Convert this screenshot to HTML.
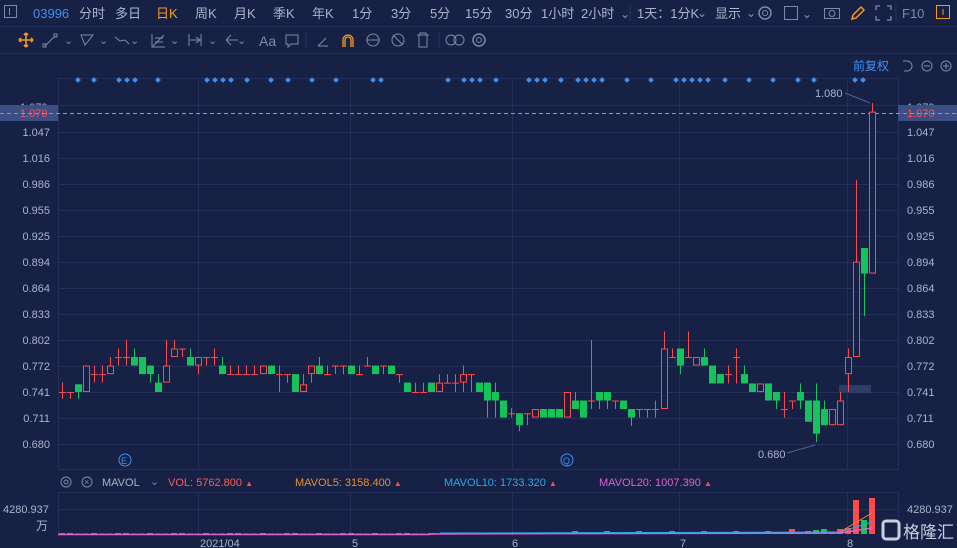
<!DOCTYPE html><html><head><meta charset="utf-8"><style>
*{margin:0;padding:0;box-sizing:border-box}
body{width:957px;height:548px;background:#172146;font-family:"Liberation Sans","Noto Sans CJK SC",sans-serif;overflow:hidden;position:relative;color:#aab4cc}
svg{position:absolute;left:0;top:0}
</style></head><body>
<svg id="s" width="957" height="548" xmlns="http://www.w3.org/2000/svg"></svg>
<script>
(function(){
var s='';
function L(x1,y1,x2,y2,c,w,d){s+='<line x1="'+x1+'" y1="'+y1+'" x2="'+x2+'" y2="'+y2+'" stroke="'+c+'" stroke-width="'+(w||1)+'"'+(d?' stroke-dasharray="'+d+'"':'')+'/>';}
function R(x,y,w,h,f,st){s+='<rect x="'+x+'" y="'+y+'" width="'+w+'" height="'+h+'" fill="'+(f||'none')+'"'+(st?' stroke="'+st+'"':'')+'/>';}
function T(x,y,t,c,sz,a){s+='<text x="'+x+'" y="'+y+'" fill="'+c+'" font-size="'+(sz||12)+'"'+(a?' text-anchor="'+a+'"':'')+' font-family="Liberation Sans,Noto Sans CJK SC,sans-serif">'+t+'</text>';}
L(0,26.5,957,26.5,'#25305a');L(0,53.5,957,53.5,'#25305a');
R(4.5,5.5,12,12,'none','#7f8aa6');L(9.5,8,9.5,15,'#7f8aa6');
var tb=[[33,'03996','#3f8fef'],[79,'分时'],[115,'多日'],[156,'日K','#f59a23'],[195,'周K'],[234,'月K'],[273,'季K'],[312,'年K'],[352,'1分'],[391,'3分'],[430,'5分'],[465,'15分'],[505,'30分'],[541,'1小时'],[581,'2小时'],[637,'1天：1分K'],[715,'显示']];
tb.forEach(function(a){T(a[0],18,a[1],a[2]||'#aab4cc',13);});
T(620,18,'⌄','#8a94b0',12);T(697,17,'⌄','#8a94b0',12);T(746,17,'⌄','#8a94b0',12);
L(630,5,630,21,'#2a3560');L(896,5,896,21,'#2a3560');
s+='<circle cx="765" cy="13" r="6" fill="none" stroke="#7f8aa6" stroke-width="1.5"/><circle cx="765" cy="13" r="2.5" fill="none" stroke="#7f8aa6"/>';
R(784.5,6.5,13,13,'none','#7f8aa6');T(802,18,'⌄','#8a94b0',12);
R(824.5,8.5,15,10,'none','#7f8aa6');s+='<circle cx="832" cy="13.5" r="3" fill="none" stroke="#7f8aa6"/>';
s+='<path d="M852 19 L853 15 L861 7 L864 10 L856 18 Z" fill="none" stroke="#f59a23" stroke-width="1.5"/>';
s+='<path d="M876 10V6h4M887 6h4v4M876 16v4h4M891 16v4h-4" fill="none" stroke="#7f8aa6" stroke-width="1.3"/>';
T(902,18,'F10','#7f8aa6',13);R(936.5,5.5,13,13,'none','#f59a23');L(943,9,943,15,'#f59a23');
s+='<path d="M26 33v14M19 40h14M26 33l-2 2M26 33l2 2M26 47l-2-2M26 47l2-2M19 40l2-2M19 40l2 2M33 40l-2-2M33 40l-2 2" stroke="#f59a23" stroke-width="1.6" fill="none"/>';
var g='#7f8aa6';
s+='<path d="M45 46l10-10" stroke="'+g+'" fill="none"/><rect x="43" y="44" width="3" height="3" fill="none" stroke="'+g+'"/><rect x="54" y="34" width="3" height="3" fill="none" stroke="'+g+'"/>';
[64,99,130,170,208,237].forEach(function(x){T(x,44,'⌄',g,11);});
s+='<path d="M81 35h12l-8 10z" fill="none" stroke="'+g+'"/>';
s+='<path d="M115 37l5 4 5-1 4 4" fill="none" stroke="'+g+'"/>';
s+='<path d="M152 34v13h13M153 46l11-11M155 38h8M155 42h8" fill="none" stroke="'+g+'"/>';
s+='<path d="M189 34v12M201 34v12M190 40h10M196 37l4 3-4 3" fill="none" stroke="'+g+'"/>';
s+='<path d="M226 40h12M226 40l5-5M226 40l5 5" fill="none" stroke="'+g+'"/>';
T(259,46,'Aa',g,14);
s+='<path d="M286 35h12v9h-7l-3 3v-3h-2z" fill="none" stroke="'+g+'"/>';
L(306,32,306,48,'#2a3560');
s+='<path d="M318 46h10M318 46l8-8" fill="none" stroke="'+g+'"/>';
s+='<path d="M343 47v-7a5 5 0 0110 0v7M345 47v-7a3 3 0 016 0v7" fill="none" stroke="#f59a23" stroke-width="1.3"/>';
s+='<circle cx="373" cy="40" r="6" fill="none" stroke="'+g+'"/><path d="M366 40h14" stroke="'+g+'"/>';
s+='<circle cx="398" cy="40" r="6" fill="none" stroke="'+g+'"/><path d="M393 35l10 10" stroke="'+g+'"/>';
s+='<path d="M417 35h12M420 35v-2h6v2M419 35v12h8V35" fill="none" stroke="'+g+'"/>';
L(439,32,439,48,'#2a3560');
s+='<circle cx="451" cy="40" r="5" fill="none" stroke="'+g+'"/><circle cx="459" cy="40" r="5" fill="none" stroke="'+g+'"/>';
s+='<circle cx="479" cy="40" r="6" fill="none" stroke="'+g+'" stroke-width="1.5"/><circle cx="479" cy="40" r="2.5" fill="none" stroke="'+g+'"/>';
T(853,70,'前复权','#3f8fef',12);
s+='<path d="M903 61h4a5 5 0 010 10h-3" fill="none" stroke="'+g+'"/>';
s+='<circle cx="927" cy="66" r="5" fill="none" stroke="'+g+'"/><path d="M924 66h6" stroke="'+g+'"/>';
s+='<circle cx="946" cy="66" r="5" fill="none" stroke="'+g+'"/><path d="M943 66h6M946 63v6" stroke="'+g+'"/>';
var gc='#24305a';
L(58.5,78,58.5,470,gc);L(898.5,78,898.5,470,gc);L(58,78.5,898,78.5,gc);L(58,469.5,898,469.5,gc);
var lv=[[1.047,132],[1.016,158],[0.986,184],[0.955,210],[0.925,236],[0.894,262],[0.864,288],[0.833,314],[0.802,340],[0.772,366],[0.741,392],[0.711,418],[0.680,444]];
lv.forEach(function(a){L(58,a[1]+.5,898,a[1]+.5,gc);T(50,a[1]+4,a[0].toFixed(3),'#aab4cc',11,'end');T(907,a[1]+4,a[0].toFixed(3),'#aab4cc',11);});
L(58,105.5,898,105.5,gc);
[198,350,512,679,847].forEach(function(x){L(x+.5,78,x+.5,470,gc);L(x+.5,492,x+.5,536,gc);});
[78,94,119,127,135,158,207,215,223,231,247,271,288,312,336,373,381,448,464,472,480,496,529,537,545,561,578,586,594,602,627,651,676,684,692,700,708,725,749,773,798,814,855,863].forEach(function(x){s+='<rect x="'+(x-2)+'" y="78" width="4" height="4" fill="#3f8fef" transform="rotate(45 '+x+' 80)"/>';});
T(907,111,'1.070','#aab4cc',11);T(20,111,'1.070','#aab4cc',11);
R(0,105,58,16,'#3b4f85');T(20,117,'1.070','#ff4d4d',11);
R(898,105,59,16,'#3b4f85');T(907,117,'1.070','#ff4d4d',11);
L(0,113.5,957,113.5,'#d4884a',1,'4,3');
function Y(p){return 340+(0.802-p)*852;}
var C=[[.741,.741,.752,.733],[.741,.741,.741,.733],[.750,.741,.750,.733],[.741,.772,.772,.741],[.762,.762,.772,.752],[.762,.762,.772,.752],[.762,.772,.782,.762],[.782,.782,.792,.772],[.782,.782,.802,.772],[.782,.772,.792,.772],[.782,.762,.782,.762],[.772,.762,.772,.752],[.752,.741,.762,.741],[.752,.772,.802,.752],[.782,.792,.802,.782],[.792,.792,.792,.782],[.782,.772,.792,.772],[.772,.782,.782,.762],[.782,.782,.782,.772],[.782,.782,.792,.772],[.772,.762,.782,.762],[.762,.762,.772,.762],[.762,.762,.772,.762],[.762,.762,.772,.762],[.762,.762,.772,.762],[.762,.772,.772,.762],[.772,.762,.772,.762],[.762,.762,.772,.741],[.762,.762,.762,.752],[.762,.741,.762,.741],[.741,.750,.762,.741],[.762,.772,.772,.752],[.772,.762,.782,.762],[.762,.762,.772,.762],[.772,.772,.772,.762],[.772,.772,.772,.762],[.772,.762,.772,.762],[.762,.762,.772,.762],[.772,.772,.782,.772],[.772,.762,.772,.762],[.772,.772,.772,.762],[.772,.762,.772,.762],[.762,.762,.762,.752],[.752,.741,.752,.741],[.741,.741,.752,.741],[.741,.741,.752,.741],[.752,.741,.752,.741],[.741,.752,.762,.741],[.752,.752,.762,.752],[.752,.752,.762,.741],[.752,.762,.772,.741],[.762,.762,.762,.741],[.752,.741,.752,.741],
[.752,.731,.752,.711],[.741,.731,.752,.711],[.731,.711,.731,.711],[.716,.716,.722,.711],[.716,.702,.716,.695],[.716,.716,.716,.702],[.711,.721,.721,.711],[.721,.711,.721,.711],[.721,.711,.721,.711],[.721,.711,.721,.711],[.711,.741,.741,.711],[.731,.721,.741,.721],[.731,.711,.731,.711],[.731,.731,.802,.721],[.741,.731,.741,.721],[.741,.731,.741,.721],[.731,.731,.731,.721],[.731,.721,.731,.721],[.721,.711,.721,.701],[.721,.721,.721,.711],[.721,.721,.721,.711],[.721,.721,.731,.711],[.721,.792,.812,.721],[.782,.782,.792,.782],[.792,.772,.792,.762],[.782,.782,.812,.782],[.772,.782,.782,.772],[.782,.772,.792,.772],[.772,.751,.772,.751],[.762,.751,.762,.751],[.762,.762,.772,.751],[.782,.782,.792,.751],[.762,.751,.772,.751],[.751,.741,.751,.741],[.741,.751,.751,.741],[.751,.731,.751,.731],[.741,.731,.741,.721],[.721,.721,.741,.711],[.731,.731,.731,.721],[.741,.731,.751,.721],[.731,.706,.731,.706],[.731,.692,.751,.682],[.721,.702,.731,.702],[.702,.721,.721,.702],[.702,.731,.741,.702],[.762,.782,.792,.741],[.782,.894,.99,.782],[.91,.88,.91,.83],[.88,1.07,1.08,.88]];
R(839,385,32,8,'#2c3d68');
C.forEach(function(c,i){var x=Math.round(62+i*8.02);var up=c[1]>=c[0];var col=up?'#ff4a4a':'#14c45a';
var yo=Y(c[0]),yc=Y(c[1]),yh=Y(c[2]),yl=Y(c[3]);var t=Math.min(yo,yc),b=Math.max(yo,yc);
L(x+.5,yh,x+.5,yl,col);
if(b-t<1.5){L(x-3,t+.5,x+4,t+.5,col);}else if(up){R(x-2.5,t+.5,6,b-t-1,'#172146',col);}else{R(x-3,t,7,b-t,col);}
});
T(815,97,'1.080','#aab4cc',11);L(845,93,870,103,'#55608a');
T(758,458,'0.680','#aab4cc',11);L(787,453,815,445,'#55608a');
s+='<circle cx="125" cy="460" r="6" fill="none" stroke="#3f8fef"/>';T(121,464,'E','#3f8fef',9);
s+='<circle cx="567" cy="460" r="6" fill="none" stroke="#3f8fef"/>';T(563,464,'Q','#3f8fef',9);
s+='<circle cx="66" cy="482" r="5" fill="none" stroke="'+g+'"/><circle cx="66" cy="482" r="2" fill="none" stroke="'+g+'"/>';
s+='<circle cx="87" cy="482" r="5" fill="none" stroke="'+g+'"/>';T(84,485,'×',g,9);
T(102,486,'MAVOL','#aab4cc',11);T(150,485,'⌄',g,11);
T(168,486,'VOL: 5762.800 <tspan fill="#ff4a4a" font-size="8">▲</tspan>','#ff5a5a',11);
T(295,486,'MAVOL5: 3158.400 <tspan fill="#ff4a4a" font-size="8">▲</tspan>','#f08a2a',11);
T(444,486,'MAVOL10: 1733.320 <tspan fill="#ff4a4a" font-size="8">▲</tspan>','#2aa8e8',11);
T(599,486,'MAVOL20: 1007.390 <tspan fill="#ff4a4a" font-size="8">▲</tspan>','#e060d0',11);
L(58.5,492,58.5,536,gc);L(898.5,492,898.5,536,gc);L(58,492.5,898,492.5,gc);L(58,509.5,898,509.5,gc);
T(3,513,'4280.937','#aab4cc',11);T(36,530,'万','#aab4cc',12);
T(907,513,'4280.937','#aab4cc',11);
C.forEach(function(c,i){var x=Math.round(62+i*8.02);var up=c[1]>=c[0];var h=((i*37)%7)<3?1:0.5;if(i>60&&(i%4==0))h=3;if(i>90)h=2+((i*13)%4);
if(i==99)h=34;if(i==100)h=14;if(i==101)h=36;if(i==98)h=6;if(i==97)h=5;
R(x-3,534-h,6,h,up?'#ff4a4a':'#14c45a');});
L(58,534.5,430,534.5,'#e060d0',1.5);L(430,534,840,533,'#e060d0',1.5);L(840,533,872,528,'#e060d0',1.5);
L(440,533,840,532,'#2aa8e8');L(840,532,872,522,'#2aa8e8');L(840,532,872,513,'#f08a2a');
T(200,547,'2021/04','#aab4cc',11);T(352,547,'5','#aab4cc',11);T(512,547,'6','#aab4cc',11);T(680,547,'7','#aab4cc',11);T(847,547,'8','#aab4cc',11);
s+='<rect x="883" y="521" width="16" height="18" rx="3" fill="none" stroke="#c8cede" stroke-width="3"/>';
T(903,538,'格隆汇','#c8cede',17);
document.getElementById('s').innerHTML=s;
})();
</script>
</body></html>
